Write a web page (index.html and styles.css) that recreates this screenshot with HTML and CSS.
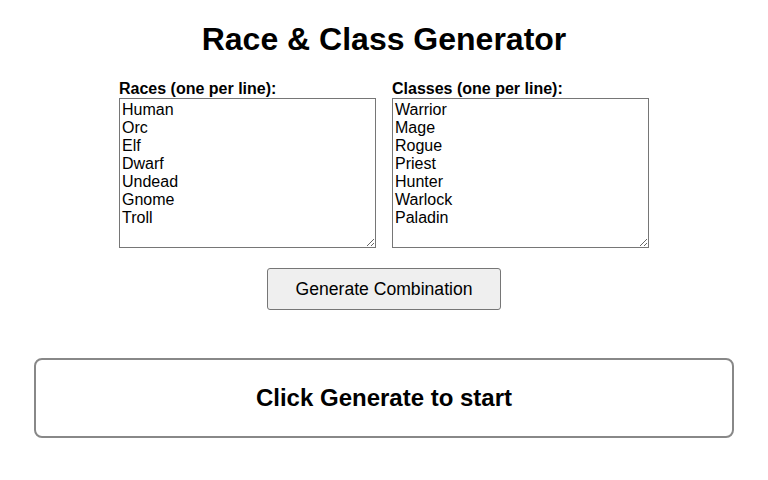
FILE: index.html
```html
<!DOCTYPE html>
<html lang="en">
<head>
<meta charset="utf-8">
<title>Race &amp; Class Generator</title>
<link rel="stylesheet" href="styles.css">
</head>
<body>
<main class="app">
  <h1 class="title">Race &amp; Class Generator</h1>
  <div class="lists">
    <div class="list">
      <label class="list-label" for="races">Races (one per line):</label>
      <textarea id="races" class="list-input">Human
Orc
Elf
Dwarf
Undead
Gnome
Troll</textarea>
    </div>
    <div class="list">
      <label class="list-label" for="classes">Classes (one per line):</label>
      <textarea id="classes" class="list-input">Warrior
Mage
Rogue
Priest
Hunter
Warlock
Paladin</textarea>
    </div>
  </div>
  <div class="actions">
    <button type="button" class="generate">Generate Combination</button>
  </div>
  <div class="result">Click Generate to start</div>
</main>
</body>
</html>
```

FILE: styles.css
```css
body {
  margin: 0;
  font-family: "Liberation Sans", Arial, sans-serif;
  color: #000;
  background: #fff;
}

.app {
  max-width: 700px;
  margin: 0 auto;
}

.title {
  font-size: 32px;
  font-weight: bold;
  text-align: center;
  margin: 21.44px 0;
}

.lists {
  display: flex;
  justify-content: center;
  gap: 16px;
}

.list-label {
  display: block;
  font-size: 16px;
  font-weight: bold;
}

.list-input {
  display: block;
  box-sizing: border-box;
  width: 257px;
  height: 150px;
  margin: 0;
  padding: 2px;
  border: 1px solid #767676;
  font-family: "Liberation Sans", Arial, sans-serif;
  font-size: 16px;
  color: #000;
}

.actions {
  display: flex;
  justify-content: center;
  margin-top: 20px;
}

.generate {
  font-family: "Liberation Sans", Arial, sans-serif;
  font-size: 17.6px;
  line-height: 20px;
  padding: 10px 27px;
  background: #efefef;
  border: 1px solid #767676;
  border-radius: 3px;
  color: #000;
}

.result {
  margin-top: 48px;
  border: 2px solid #888;
  border-radius: 8px;
  padding: 24px;
  text-align: center;
  font-size: 24px;
  font-weight: bold;
}
```
